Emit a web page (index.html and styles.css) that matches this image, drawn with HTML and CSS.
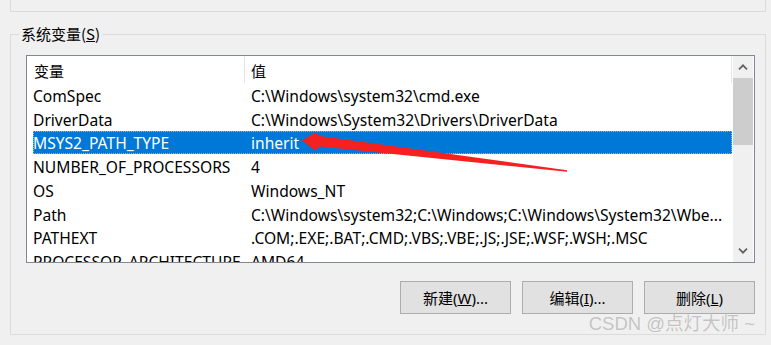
FILE: index.html
```html
<!DOCTYPE html>
<html lang="zh-CN">
<head>
<meta charset="utf-8">
<title>系统变量</title>
<link rel="stylesheet" href="styles.css">
</head>
<body>
<div class="top-group"></div>
<fieldset class="group">
  <legend class="group-title">系统变量(<u>S</u>)</legend>
  <div class="listbox">
    <div class="list">
      <div class="header">
        <div class="hcell hname">变量</div>
        <div class="hcell hval">值</div>
      </div>
      <div class="rows">
        <div class="row"><span class="name">ComSpec</span><span class="val">C:\Windows\system32\cmd.exe</span></div>
        <div class="row"><span class="name">DriverData</span><span class="val">C:\Windows\System32\Drivers\DriverData</span></div>
        <div class="row selected"><span class="name">MSYS2_PATH_TYPE</span><span class="val">inherit</span></div>
        <div class="row"><span class="name">NUMBER_OF_PROCESSORS</span><span class="val">4</span></div>
        <div class="row"><span class="name">OS</span><span class="val">Windows_NT</span></div>
        <div class="row"><span class="name">Path</span><span class="val">C:\Windows\system32;C:\Windows;C:\Windows\System32\Wbe...</span></div>
        <div class="row"><span class="name">PATHEXT</span><span class="val">.COM;.EXE;.BAT;.CMD;.VBS;.VBE;.JS;.JSE;.WSF;.WSH;.MSC</span></div>
        <div class="row"><span class="name">PROCESSOR_ARCHITECTURE</span><span class="val">AMD64</span></div>
      </div>
    </div>
    <div class="scrollbar">
      <div class="sb-btn">
        <svg width="10" height="6" viewBox="0 0 10 6"><path d="M1 5.3 L5 1.3 L9 5.3" fill="none" stroke="#606060" stroke-width="1.7"/></svg>
      </div>
      <div class="thumb"></div>
      <div class="track"></div>
      <div class="sb-btn">
        <svg width="10" height="6" viewBox="0 0 10 6"><path d="M1 0.7 L5 4.7 L9 0.7" fill="none" stroke="#606060" stroke-width="1.7"/></svg>
      </div>
    </div>
  </div>
  <div class="buttons">
    <button class="btn">新建(<u>W</u>)...</button>
    <button class="btn">编辑(<u>I</u>)...</button>
    <button class="btn">删除(<u>L</u>)</button>
  </div>
</fieldset>
<div class="watermark">CSDN @点灯大师 ~</div>
<svg class="arrow" width="771" height="345" viewBox="0 0 771 345">
  <polygon points="302,140.5 315,132.8 320,136 567,170.2 567,171.8 320,146.5 315,150.5" fill="#f52020"/>
</svg>
</body>
</html>
```

FILE: styles.css
```css
html, body {
  margin: 0;
  padding: 0;
}
body {
  width: 771px;
  height: 345px;
  overflow: hidden;
  background: #f0f0f0;
  position: relative;
  font-family: "Noto Sans", "Noto Sans CJK SC", sans-serif;
  color: #000;
}
.top-group {
  height: 11px;
  margin: 0 5px 0 10px;
  border: 1px solid #dcdcdc;
  border-top: none;
}
.group {
  margin: 12px 5px 0 10px;
  padding: 0 10px 20px 15px;
  border: 1px solid #dcdcdc;
  min-width: 0;
}
.group-title {
  margin-left: -7px;
  padding: 0 2px;
  font-family: "Noto Sans CJK SC", sans-serif;
  font-size: 15px;
  line-height: 20px;
}
.listbox {
  margin-top: 11px;
  height: 206px;
  border: 1px solid #828790;
  background: #fff;
  display: flex;
  padding-right: 1px;
  overflow: hidden;
}
.list {
  flex: 1;
  overflow: hidden;
}
.header {
  height: 27px;
  display: flex;
  font-family: "Noto Sans CJK SC", sans-serif;
  font-size: 15px;
}
.hcell {
  line-height: 27px;
  padding-top: 1px;
  box-sizing: border-box;
  height: 27px;
}
.hname {
  width: 218px;
  padding-left: 7px;
  border-right: 1px solid #e5e5e5;
}
.hval {
  flex: 1;
  padding-left: 6px;
  border-right: 1px solid #e5e5e5;
  margin-right: 1px;
}
.rows {
  margin-left: 6px;
  margin-right: 1px;
}
.row {
  display: grid;
  grid-template-columns: 211px 1fr;
  height: 23.75px;
  line-height: 23.75px;
  font-size: 15.6px;
  white-space: nowrap;
  box-sizing: border-box;
  padding-top: 1.8px;
}
.val {
  padding-left: 7px;
  overflow: hidden;
}
.row.selected {
  background: #0078d7;
  color: #fff;
  outline: 1px dotted #eda24a;
  outline-offset: -1px;
}
.scrollbar {
  width: 20px;
  display: flex;
  flex-direction: column;
  background: #f0f0f0;
}
.sb-btn {
  height: 22px;
  display: flex;
  align-items: center;
  justify-content: center;
}
.thumb {
  height: 67px;
  background: #cdcdcd;
}
.track {
  flex: 1;
}
.buttons {
  margin-top: 18px;
  display: flex;
  justify-content: flex-end;
  gap: 11px;
}
.btn {
  width: 111px;
  height: 33px;
  margin: 0;
  padding: 0;
  background: #e1e1e1;
  border: 1px solid #adadad;
  font-family: "Noto Sans", "Noto Sans CJK SC", sans-serif;
  font-size: 15px;
  color: #000;
  line-height: 20px;
}
.watermark {
  position: absolute;
  right: 16px;
  top: 313px;
  font-family: "Liberation Sans", "Noto Sans CJK SC", sans-serif;
  font-size: 18.5px;
  line-height: 22px;
  color: #c3c3c3;
  text-shadow: 0 0 1px #fff;
  white-space: nowrap;
}
.arrow {
  position: absolute;
  left: 0;
  top: 0;
  pointer-events: none;
}
```
